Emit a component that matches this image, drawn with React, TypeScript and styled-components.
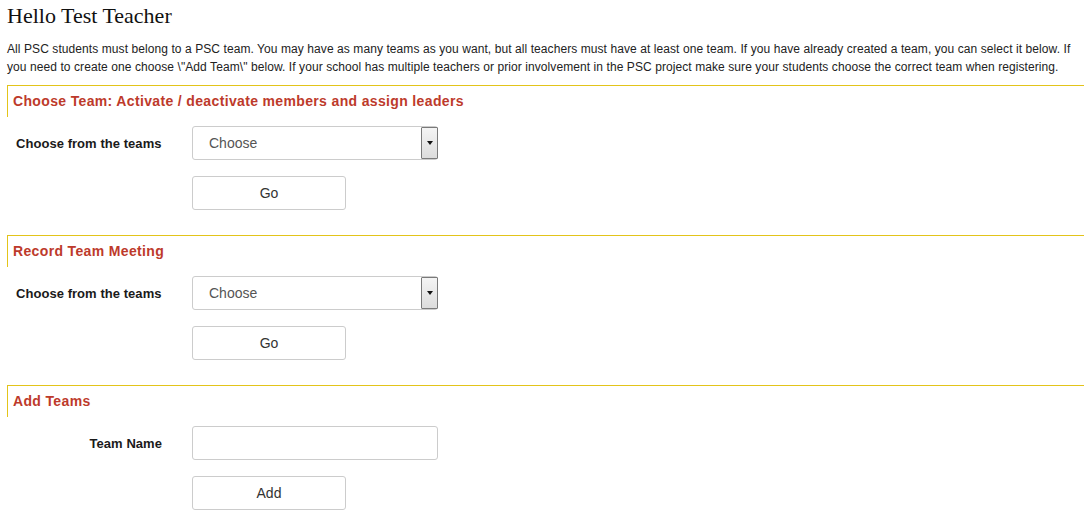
import styled, { createGlobalStyle } from "styled-components"

const GlobalStyle = createGlobalStyle`
  html, body {
    margin: 0;
    padding: 0;
    background: #fff;
  }
  body {
    font-family: "Liberation Sans", Arial, sans-serif;
    color: #333;
  }
`

const Page = styled.div`
  padding: 0 0 0 7px;
`

const Title = styled.h1`
  font-family: "Liberation Serif", "Times New Roman", serif;
  font-weight: normal;
  font-size: 22px;
  line-height: 24px;
  color: #111;
  margin: 4px 0 0 0;
`

const Intro = styled.p`
  font-size: 12px;
  line-height: 18px;
  color: #222;
  margin: 12px 8px 0 0;
  letter-spacing: 0.08px;
`

const Section = styled.section`
  margin-top: 25px;

  &:first-of-type {
    margin-top: 9px;
  }
`

const SectionHeader = styled.h2`
  margin: 0;
  height: 32px;
  box-sizing: border-box;
  border-top: 1px solid #e3c41a;
  border-left: 1px solid #e3c41a;
  padding: 6px 0 0 5px;
  font-size: 14px;
  line-height: 18px;
  font-weight: bold;
  letter-spacing: 0.35px;
  color: #bd3a2b;
`

const FormGrid = styled.div`
  display: grid;
  grid-template-columns: 155px 246px;
  column-gap: 30px;
  row-gap: 16px;
  margin-top: 9px;
  align-items: center;
`

const Label = styled.label<{ $align?: string }>`
  font-size: 13px;
  font-weight: bold;
  letter-spacing: 0.05px;
  white-space: nowrap;
  color: #1a1a1a;
  text-align: ${(p) => p.$align || "left"};
  padding-left: 9px;
`

const SelectWrap = styled.div`
  position: relative;
  height: 34px;
`

const Select = styled.select`
  appearance: none;
  width: 100%;
  height: 34px;
  box-sizing: border-box;
  border: 1px solid #ccc;
  border-radius: 3px;
  background: #fff;
  padding: 0 0 0 16px;
  font-family: "Liberation Sans", Arial, sans-serif;
  font-size: 14px;
  color: #555;
  outline: none;
`

const ArrowBox = styled.span`
  position: absolute;
  top: 1px;
  right: 0;
  width: 17px;
  height: 32px;
  box-sizing: border-box;
  border: 1px solid #7a7a7a;
  border-radius: 1px;
  background: linear-gradient(#f4f4f4, #dcdcdc);
  display: flex;
  align-items: center;
  justify-content: center;
  pointer-events: none;

  &::after {
    content: "";
    border-left: 3.5px solid transparent;
    border-right: 3.5px solid transparent;
    border-top: 4px solid #111;
  }
`

const TextInput = styled.input`
  width: 100%;
  height: 34px;
  box-sizing: border-box;
  border: 1px solid #ccc;
  border-radius: 3px;
  padding: 0 12px;
  font-size: 14px;
  outline: none;
`

const Button = styled.button`
  grid-column: 2;
  width: 154px;
  height: 34px;
  box-sizing: border-box;
  border: 1px solid #ccc;
  border-radius: 3px;
  background: #fff;
  font-family: "Liberation Sans", Arial, sans-serif;
  font-size: 14px;
  color: #333;
  cursor: pointer;
`

const TeamPicker = ({ title }: { title: string }) => (
  <Section>
    <SectionHeader>{title}</SectionHeader>
    <FormGrid>
      <Label>Choose from the teams</Label>
      <SelectWrap>
        <Select defaultValue="">
          <option value="">Choose</option>
        </Select>
        <ArrowBox />
      </SelectWrap>
      <Button>Go</Button>
    </FormGrid>
  </Section>
)

export default function App() {
  return (
    <Page>
      <GlobalStyle />
      <Title>Hello Test Teacher</Title>
      <Intro>
        All PSC students must belong to a PSC team. You may have as many teams as you want, but all
        teachers must have at least one team. If you have already created a team, you can select it
        below. If you need to create one choose \"Add Team\" below. If your school has multiple
        teachers or prior involvement in the PSC project make sure your students choose the correct
        team when registering.
      </Intro>
      <TeamPicker title="Choose Team: Activate / deactivate members and assign leaders" />
      <TeamPicker title="Record Team Meeting" />
      <Section>
        <SectionHeader>Add Teams</SectionHeader>
        <FormGrid>
          <Label $align="right">Team Name</Label>
          <TextInput type="text" />
          <Button>Add</Button>
        </FormGrid>
      </Section>
    </Page>
  )
}
